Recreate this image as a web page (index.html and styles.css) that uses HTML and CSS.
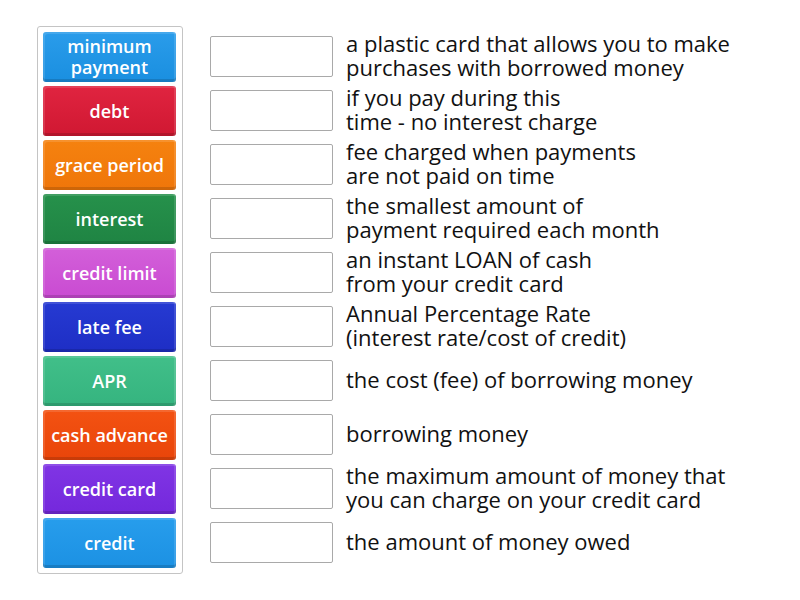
FILE: index.html
```html
<!DOCTYPE html>
<html>
<head>
<meta charset="utf-8">
<link rel="stylesheet" href="styles.css">
</head>
<body>
<div class="page">
  <div class="bank">
    <div class="tile c1">minimum<br>payment</div>
    <div class="tile c2">debt</div>
    <div class="tile c3">grace period</div>
    <div class="tile c4">interest</div>
    <div class="tile c5">credit limit</div>
    <div class="tile c6">late fee</div>
    <div class="tile c7">APR</div>
    <div class="tile c8">cash advance</div>
    <div class="tile c9">credit card</div>
    <div class="tile c10">credit</div>
  </div>
  <div class="rows">
    <div class="row"><div class="slot"></div><div class="def">a plastic card that allows you to make<br>purchases with borrowed money</div></div>
    <div class="row"><div class="slot"></div><div class="def">if you pay during this<br>time - no interest charge</div></div>
    <div class="row"><div class="slot"></div><div class="def">fee charged when payments<br>are not paid on time</div></div>
    <div class="row"><div class="slot"></div><div class="def">the smallest amount of<br>payment required each month</div></div>
    <div class="row"><div class="slot"></div><div class="def">an instant LOAN of cash<br>from your credit card</div></div>
    <div class="row"><div class="slot"></div><div class="def">Annual Percentage Rate<br>(interest rate/cost of credit)</div></div>
    <div class="row"><div class="slot"></div><div class="def">the cost (fee) of borrowing money</div></div>
    <div class="row"><div class="slot"></div><div class="def">borrowing money</div></div>
    <div class="row"><div class="slot"></div><div class="def">the maximum amount of money that<br>you can charge on your credit card</div></div>
    <div class="row"><div class="slot"></div><div class="def">the amount of money owed</div></div>
  </div>
</div>
</body>
</html>
```

FILE: styles.css
```css
html, body {
  margin: 0;
  padding: 0;
  background: #ffffff;
}
body {
  font-family: "Open Sans", "Noto Sans", sans-serif;
  color: #111;
}
.page {
  display: flex;
  align-items: flex-start;
  padding: 26px 0 0 37px;
}
.bank {
  display: flex;
  flex-direction: column;
  gap: 4px;
  width: 133px;
  padding: 5px 6px 5px 5px;
  border: 1px solid #c4c4c4;
  border-radius: 3px;
}
.tile {
  height: 50px;
  box-sizing: border-box;
  display: flex;
  align-items: center;
  justify-content: center;
  text-align: center;
  color: #fff;
  font-family: "Open Sans", sans-serif;
  font-size: 18px;
  font-weight: 600;
  line-height: 21px;
  border-radius: 3px;
  box-shadow: inset 0 -3px 0 rgba(0,0,0,0.14), inset 2px 2px 0 rgba(255,255,255,0.13), inset -2px 0 0 rgba(255,255,255,0.13);
}
.c1 { background: linear-gradient(#2a9cea, #1a8fe0); }
.c2 { background: linear-gradient(#e02440, #d01832); }
.c3 { background: linear-gradient(#f5820f, #ef760a); }
.c4 { background: linear-gradient(#26914b, #1f8443); }
.c5 { background: linear-gradient(#d35fd9, #c94bd2); }
.c6 { background: linear-gradient(#263ad2, #1e2ec5); }
.c7 { background: linear-gradient(#41bf89, #35b47f); }
.c8 { background: linear-gradient(#f35212, #e9450a); }
.c9 { background: linear-gradient(#8035e4, #7428dc); }
.c10 { background: linear-gradient(#279dec, #1c91e3); }
.rows {
  display: flex;
  flex-direction: column;
  gap: 4px;
  margin-left: 27px;
  padding-top: 6px;
}
.row {
  height: 50px;
  display: flex;
  align-items: center;
  gap: 13px;
}
.slot {
  width: 123px;
  height: 41px;
  margin-top: -1px;
  box-sizing: border-box;
  border: 1px solid #a9a9a9;
  border-radius: 2px;
  background: #fff;
  flex: none;
}
.def {
  font-size: 22px;
  line-height: 24px;
  color: #111;
  margin-top: -4px;
}
```
